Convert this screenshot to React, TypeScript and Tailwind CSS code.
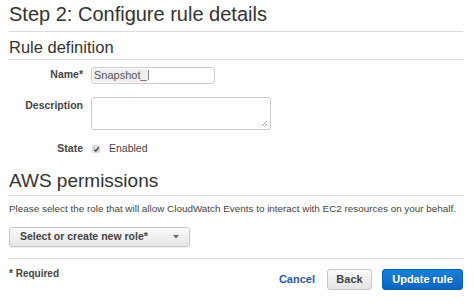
import React from "react";

export default function App() {
  return (
    <div
      className="w-[474px] h-[304px] bg-white overflow-hidden px-[9px] pr-[11px] text-[#333]"
      style={{ fontFamily: '"Liberation Sans", Arial, sans-serif' }}
    >
      <h1 className="text-[20px] leading-[26px] pt-[1px] pb-[4px] border-b border-[#ddd] text-[#333]">
        Step 2: Configure rule details
      </h1>
      <h2 className="text-[16.5px] leading-[20px] pt-[5px] pb-[2px] border-b border-[#ddd] text-[#333]">
        Rule definition
      </h2>
      <div className="flex flex-col pt-[6px]">
        <div className="flex items-center h-[18px]">
          <div className="w-[74px] text-right text-[10.5px] font-bold text-[#444]">Name*</div>
          <div className="ml-[8px] w-[124px] h-[17px] border border-[#ccc] rounded-[3px] flex items-center px-[1px] text-[11px] text-[#555]">
            <span className="bg-[#eee] pl-[1px] pr-[1px] leading-[13px]">Snapshot_</span>
            <span className="w-[1px] h-[10px] bg-[#888]" />
          </div>
        </div>
        <div className="flex items-start mt-[13px]">
          <div className="w-[74px] text-right text-[10.5px] font-bold text-[#444] pt-[1px]">Description</div>
          <div className="ml-[8px] w-[180px] h-[33px] border border-[#ccc] rounded-[3px] relative">
            <svg className="absolute right-[2px] bottom-[2px]" width="7" height="7" viewBox="0 0 7 7">
              <path d="M6 1L1 6M6 4L4 6" stroke="#999" strokeWidth="0.8" />
            </svg>
          </div>
        </div>
        <div className="flex items-center mt-[12px] h-[14px]">
          <div className="w-[74px] text-right text-[10.5px] font-bold text-[#444]">State</div>
          <div className="ml-[9px] w-[8px] h-[8px] rounded-[2px] bg-[#d8d8d8] flex items-center justify-center">
            <svg width="7" height="7" viewBox="0 0 7 7">
              <path d="M1.3 3.6L2.8 5.2L5.8 1.4" stroke="#333" strokeWidth="1.2" fill="none" />
            </svg>
          </div>
          <span className="ml-[9px] text-[10.5px] text-[#444]">Enabled</span>
        </div>
      </div>
      <h2 className="text-[19px] leading-[22px] mt-[14px] pb-[3px] border-b border-[#ddd] text-[#333]">
        AWS permissions
      </h2>
      <p className="text-[9.9px] text-[#444] mt-[7px] leading-[12px] whitespace-nowrap">
        Please select the role that will allow CloudWatch Events to interact with EC2 resources on your behalf.
      </p>
      <div className="mt-[12px] w-[181px] h-[20px] rounded-[3px] border border-[#c8c8c8] bg-gradient-to-b from-[#fafafa] to-[#e6e6e6] flex items-center justify-between pl-[10px] pr-[10px] shadow-[0_1px_1px_rgba(0,0,0,0.08)]">
        <span className="text-[10.5px] font-bold text-[#444]">Select or create new role*</span>
        <svg width="6" height="4" viewBox="0 0 6 4">
          <path d="M0 0H6L3 3.5Z" fill="#666" />
        </svg>
      </div>
      <div className="mt-[11px] border-t border-[#ddd] flex items-start justify-between pt-[9px]">
        <span className="text-[10px] font-bold text-[#444] leading-[12px]">* Required</span>
        <div className="flex items-center mt-[1px]">
          <span className="text-[11px] font-bold text-[#2a5aa0] mr-[12px]">Cancel</span>
          <div className="w-[45px] h-[21px] rounded-[3px] border border-[#c8c8c8] bg-gradient-to-b from-[#fafafa] to-[#e4e4e4] flex items-center justify-center text-[11px] font-bold text-[#444]">
            Back
          </div>
          <div className="ml-[10px] w-[81px] h-[21px] rounded-[3px] bg-gradient-to-b from-[#1a80d6] to-[#0a66c0] border border-[#0a5fb0] flex items-center justify-center text-[11px] font-bold text-white">
            Update rule
          </div>
        </div>
      </div>
    </div>
  );
}
